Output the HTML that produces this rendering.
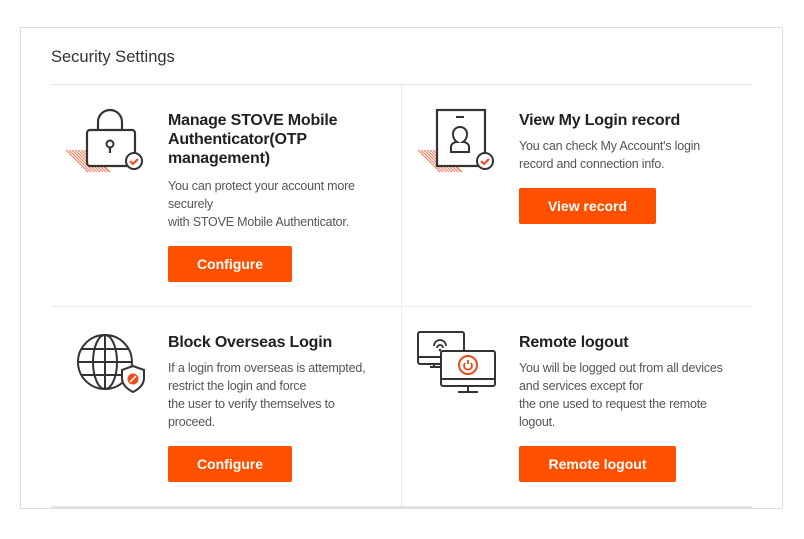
<!DOCTYPE html>
<html><head><meta charset="utf-8"><style>
*{margin:0;padding:0;box-sizing:border-box}
body{width:804px;height:539px;background:#fff;font-family:"Liberation Sans","Noto Sans CJK KR",sans-serif;position:relative;overflow:hidden}
.card{position:absolute;left:20px;top:27px;width:763px;height:482px;border:1px solid #dcdcdc;background:#fff}
.abs{position:absolute}
h1{position:absolute;left:51px;top:48px;font-size:16.5px;font-weight:normal;color:#333}
h2{position:absolute;font-size:16px;font-weight:bold;color:#222;line-height:19px;letter-spacing:-0.2px}
p{position:absolute;font-size:12.5px;color:#555;line-height:18px;letter-spacing:-0.2px}
.btn{position:absolute;height:36px;background:#ff5000;color:#fff;font-weight:bold;font-size:14px;line-height:36px;text-align:center;border-radius:2px}
</style></head><body>
<div class="card"></div>
<h1>Security Settings</h1>
<div class="abs" style="left:51px;top:84px;width:701px;height:1px;background:#e2e2e2"></div>
<div class="abs" style="left:51px;top:306px;width:701px;height:1px;background:#ececec"></div>
<div class="abs" style="left:401px;top:85px;width:1px;height:421px;background:#ececec"></div>
<div class="abs" style="left:51px;top:506px;width:701px;height:2px;background:#e4e4e4"></div>

<svg class="abs" style="left:60px;top:100px" width="100" height="80" viewBox="0 0 100 80">
<g stroke="#f47a5a" stroke-width="1"><path d="M6 50 l22 22 M9 50 l22 22 M12 50 l22 22 M15 50 l22 22 M18 50 l22 22 M21 50 l22 22 M24 50 l22 22 M27 50 l22 22 M30 52 l20 20"/></g>
<path d="M38 30 V22 a12 12 0 0 1 24 0 V30" fill="none" stroke="#333" stroke-width="2.2"/>
<rect x="27" y="30" width="48" height="36" rx="3" fill="#fff" stroke="#333" stroke-width="2.2"/>
<circle cx="50" cy="44" r="3.5" fill="none" stroke="#333" stroke-width="2"/><path d="M50 47.5 V53" stroke="#333" stroke-width="2.2"/>
<circle cx="74" cy="61" r="8" fill="#fff" stroke="#333" stroke-width="2"/>
<path d="M70 61 l3 3 l5-5" fill="none" stroke="#f04a1c" stroke-width="2"/>
</svg>

<svg class="abs" style="left:410px;top:100px" width="100" height="80" viewBox="0 0 100 80">
<g stroke="#f47a5a" stroke-width="1"><path d="M8 50 l22 22 M11 50 l22 22 M14 50 l22 22 M17 50 l22 22 M20 50 l22 22 M23 50 l22 22 M26 50 l22 22 M29 50 l22 22 M32 52 l20 20"/></g>
<rect x="27" y="10" width="48" height="56" fill="#fff" stroke="#333" stroke-width="2.2"/>
<path d="M46 17 h8" stroke="#333" stroke-width="2"/>
<path d="M41 52 v-5 c0-3 3-5 6-5 c-3-2-4-5-4-8 c0-4 3-7 7-7 c4 0 7 3 7 7 c0 3-1 6-4 8 c3 0 6 2 6 5 v5 z" fill="none" stroke="#333" stroke-width="2"/>
<circle cx="75" cy="61" r="8" fill="#fff" stroke="#333" stroke-width="2"/>
<path d="M71 61 l3 3 l5-5" fill="none" stroke="#f04a1c" stroke-width="2"/>
</svg>

<svg class="abs" style="left:60px;top:320px" width="100" height="80" viewBox="0 0 100 80">
<g fill="none" stroke="#333" stroke-width="2">
<circle cx="45" cy="42" r="27"/>
<ellipse cx="45" cy="42" rx="12" ry="27"/>
<path d="M45 15 V69 M18 42 H72 M21 29 H69 M21 55 H69"/>
</g>
<path d="M73 46 l11 4 v8 c0 7-5 11-11 14 c-6-3-11-7-11-14 v-8 z" fill="#fff" stroke="#333" stroke-width="2"/>
<circle cx="73" cy="59" r="5.5" fill="#f04a1c"/><path d="M70 62 l6-6" stroke="#fff" stroke-width="1.5"/>
</svg>

<svg class="abs" style="left:410px;top:320px" width="100" height="80" viewBox="0 0 100 80">
<g fill="none" stroke="#333" stroke-width="2">
<rect x="8" y="12" width="46" height="32" rx="2"/>
<path d="M8 37 H32 M24 44 v3 M20 47 h10"/>
<path d="M24 26 a6 6 0 0 1 12 0 M27 28 a3 3 0 0 1 6 0" stroke-width="1.8"/>
</g>
<circle cx="30" cy="30" r="1.3" fill="#333"/>
<rect x="31" y="31" width="54" height="35" rx="2" fill="#fff" stroke="#333" stroke-width="2"/>
<path d="M31 59 H85 M58 66 v5 M48 72 h20" stroke="#333" stroke-width="2"/>
<circle cx="58" cy="45" r="9" fill="none" stroke="#f04a1c" stroke-width="2"/>
<path d="M55 43 a4 4 0 1 0 6 0 M58 40 v4" fill="none" stroke="#f04a1c" stroke-width="1.8"/>
</svg>

<h2 style="left:168px;top:111px">Manage STOVE Mobile<br>Authenticator(OTP<br>management)</h2>
<p style="left:168px;top:177px">You can protect your account more<br>securely<br>with STOVE Mobile Authenticator.</p>
<div class="btn" style="left:168px;top:246px;width:124px">Configure</div>

<h2 style="left:519px;top:111px">View My Login record</h2>
<p style="left:519px;top:137px">You can check My Account's login<br>record and connection info.</p>
<div class="btn" style="left:519px;top:188px;width:137px">View record</div>

<h2 style="left:168px;top:333px">Block Overseas Login</h2>
<p style="left:168px;top:359px">If a login from overseas is attempted,<br>restrict the login and force<br>the user to verify themselves to<br>proceed.</p>
<div class="btn" style="left:168px;top:446px;width:124px">Configure</div>

<h2 style="left:519px;top:333px">Remote logout</h2>
<p style="left:519px;top:359px">You will be logged out from all devices<br>and services except for<br>the one used to request the remote<br>logout.</p>
<div class="btn" style="left:519px;top:446px;width:157px">Remote logout</div>
</body></html>
